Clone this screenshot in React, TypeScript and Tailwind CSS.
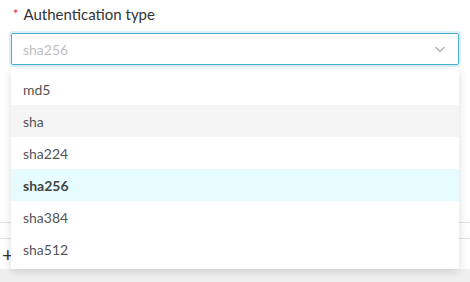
import { useState } from "react";

const options = ["md5", "sha", "sha224", "sha256", "sha384", "sha512"];

function Chevron() {
  return (
    <svg width="12" height="12" viewBox="0 0 12 12" fill="none">
      <path d="M1.5 4l4.5 4.5L10.5 4" stroke="#a6a6a6" strokeWidth="1.1" />
    </svg>
  );
}

export default function App() {
  const [selected] = useState("sha256");
  const [hovered] = useState("sha");

  return (
    <div
      className="relative w-[470px] h-[282px] overflow-hidden bg-white flex flex-col"
      style={{ fontFamily: "Lato, 'Open Sans', sans-serif" }}
    >
      {/* form field */}
      <div className="px-[11px] pt-[3px] relative">
        <div className="flex items-center h-[22px] pl-[2px] text-[15px] text-[#333]">
          <span className="text-[#f5222d] mr-[5px] text-[13px] leading-none">*</span>
          Authentication type
        </div>
        <div className="mt-[8px] h-[32px] flex items-center justify-between border border-[#4aafd3] rounded-[2px] shadow-[0_0_0_2px_rgba(74,175,211,0.2)] pl-[11px] pr-[12px]">
          <span className="text-[14px] text-[#bfbfbf]">sha256</span>
          <Chevron />
        </div>

        {/* open dropdown menu */}
        <div className="absolute z-10 left-[11px] top-[69px] w-[448px] bg-white rounded-[2px] py-[4px] shadow-[0_2px_8px_rgba(0,0,0,0.15)]">
          {options.map((o) => (
            <div
              key={o}
              className={
                "h-[32px] flex items-center px-[12px] text-[14px] " +
                (o === selected
                  ? "bg-[#e6fcff] font-bold text-[#444]"
                  : o === hovered
                  ? "bg-[#f5f5f5] text-[#555]"
                  : "text-[#555]")
              }
            >
              {o}
            </div>
          ))}
        </div>
      </div>

      {/* content below, hidden by the menu */}
      <div className="mt-[157px] border-t border-[#e3e3e3] h-[16px]" />
      <div className="border-t border-[#e3e3e3] h-[31px] flex items-center pl-[2px] text-[20px] text-[#333] leading-none">
        +
      </div>
      <div className="flex-1 bg-[#efefef]" />
    </div>
  );
}
